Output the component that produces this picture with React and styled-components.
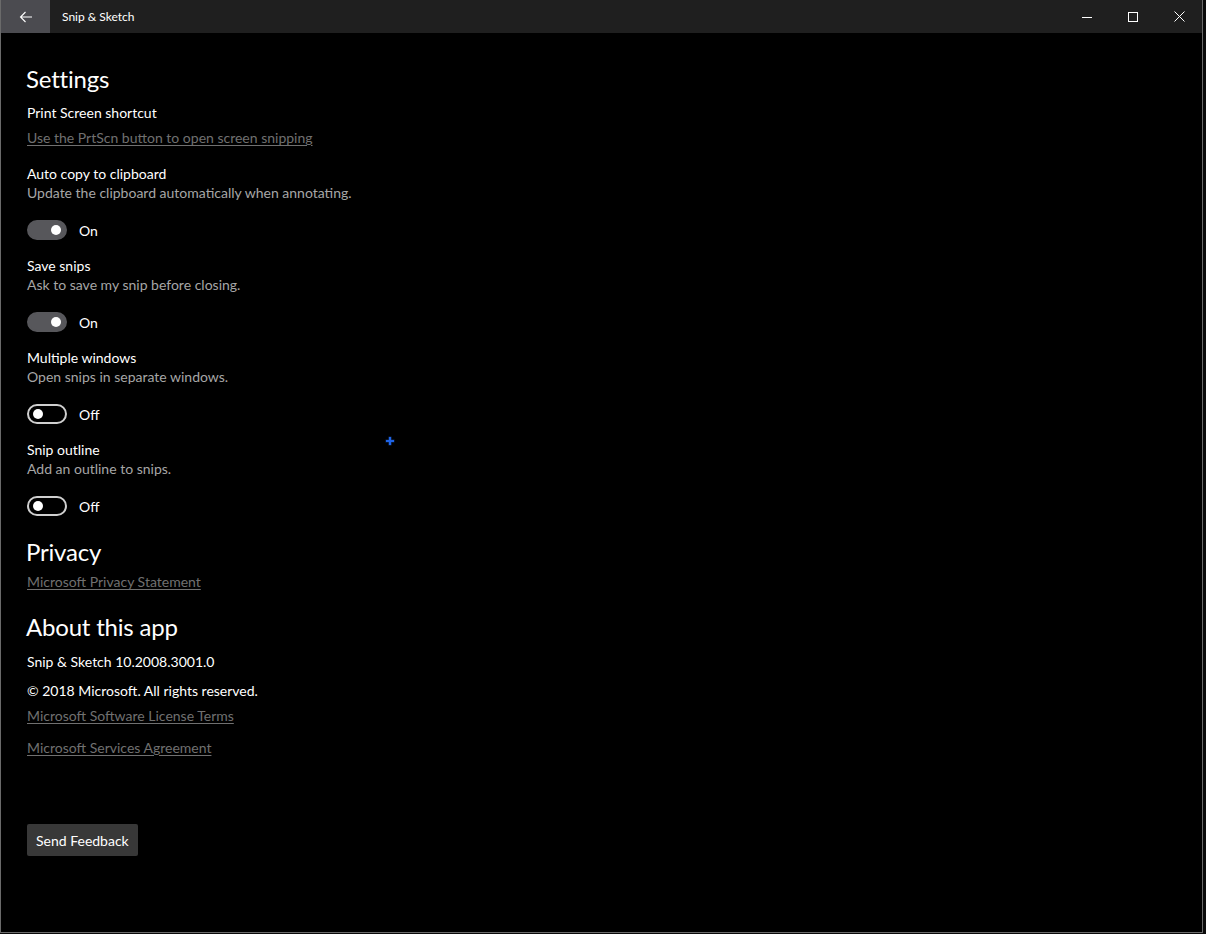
import React from "react";
import styled, { createGlobalStyle } from "styled-components";

const Global = createGlobalStyle`
  html, body { margin: 0; padding: 0; background: #0b0b0b; }
  body { font-family: "Lato", "Segoe UI", "Noto Sans", sans-serif; color: #fff; }
  * { box-sizing: border-box; }
`;

const Window = styled.div`
  position: relative;
  width: 1203px;
  height: 933px;
  background: #000;
  border-left: 1px solid #6a6a6a;
  border-right: 1px solid #6a6a6a;
  border-bottom: 1px solid #6a6a6a;
  display: flex;
  flex-direction: column;
`;

const TitleBar = styled.div`
  height: 33px;
  flex: none;
  background: #1f1f1f;
  display: flex;
  align-items: center;
`;

const BackButton = styled.div`
  width: 49px;
  height: 33px;
  background: #4b4b50;
  display: flex;
  align-items: center;
  justify-content: center;
`;

const Title = styled.div`
  margin-left: 12px;
  font-size: 12px;
  color: #fff;
  flex: 1;
`;

const CaptionButton = styled.div`
  width: 46px;
  height: 33px;
  display: flex;
  align-items: center;
  justify-content: center;
`;

const Content = styled.div`
  flex: 1;
  padding: 0 26px;
  display: flex;
  flex-direction: column;
  align-items: flex-start;
`;

const Heading = styled.div`
  font-size: 24px;
  line-height: 32px;
  font-weight: 400;
  letter-spacing: -0.2px;
  color: #fff;
  margin-top: ${(p) => p.$mt}px;
  margin-left: -1px;
`;

const Label = styled.div`
  font-size: 14px;
  line-height: 19px;
  color: #fff;
  margin-top: ${(p) => p.$mt || 0}px;
`;

const Desc = styled.div`
  font-size: 14px;
  line-height: 19px;
  color: #a6a6a6;
`;

const Link = styled.a`
  font-size: 14px;
  line-height: 19px;
  color: #707070;
  text-decoration: underline;
  text-underline-offset: 2px;
  margin-top: ${(p) => p.$mt || 0}px;
`;

const ToggleRow = styled.div`
  display: flex;
  align-items: center;
  gap: 12px;
  height: 20px;
  margin-top: 18px;
  font-size: 14px;
`;

const Track = styled.div`
  width: 40px;
  height: 20px;
  border-radius: 10px;
  display: flex;
  align-items: center;
  padding: 0 4px;
  justify-content: ${(p) => (p.$on ? "flex-end" : "flex-start")};
  background: ${(p) => (p.$on ? "#57575b" : "transparent")};
  border: 2px solid ${(p) => (p.$on ? "#57575b" : "#cfcfcf")};
`;

const Knob = styled.div`
  width: 10px;
  height: 10px;
  border-radius: 50%;
  background: #fff;
`;

const Button = styled.div`
  margin-top: 67px;
  height: 32px;
  padding: 0 9px;
  display: flex;
  align-items: center;
  background: #383838;
  border-radius: 2px;
  font-size: 14px;
  color: #fff;
`;

const Cursor = styled.svg`
  position: absolute;
  left: 383px;
  top: 435px;
`;

const settings = [
  { title: "Auto copy to clipboard", desc: "Update the clipboard automatically when annotating.", on: true },
  { title: "Save snips", desc: "Ask to save my snip before closing.", on: true },
  { title: "Multiple windows", desc: "Open snips in separate windows.", on: false },
  { title: "Snip outline", desc: "Add an outline to snips.", on: false },
];

function Toggle({ on }) {
  return (
    <ToggleRow>
      <Track $on={on}>
        <Knob />
      </Track>
      <span>{on ? "On" : "Off"}</span>
    </ToggleRow>
  );
}

export default function App() {
  return (
    <>
      <Global />
      <Window>
        <TitleBar>
          <BackButton>
            <svg width="14" height="12" viewBox="0 0 14 12">
              <path d="M13 6H1.5M6.5 1L1.5 6l5 5" stroke="#fff" strokeWidth="1.1" fill="none" />
            </svg>
          </BackButton>
          <Title>Snip &amp; Sketch</Title>
          <CaptionButton>
            <svg width="10" height="10" viewBox="0 0 10 10">
              <path d="M0 5.5h10" stroke="#fff" strokeWidth="1" />
            </svg>
          </CaptionButton>
          <CaptionButton>
            <svg width="10" height="10" viewBox="0 0 10 10">
              <rect x="0.5" y="0.5" width="9" height="9" stroke="#fff" strokeWidth="1" fill="none" />
            </svg>
          </CaptionButton>
          <CaptionButton>
            <svg width="11" height="11" viewBox="0 0 11 11">
              <path d="M0.5 0.5l10 10M10.5 0.5l-10 10" stroke="#fff" strokeWidth="1" />
            </svg>
          </CaptionButton>
        </TitleBar>
        <Content>
          <Heading $mt={30}>Settings</Heading>
          <Label $mt={8}>Print Screen shortcut</Label>
          <Link $mt={6}>Use the PrtScn button to open screen snipping</Link>
          {settings.map((s, i) => (
            <React.Fragment key={s.title}>
              <Label $mt={i === 0 ? 17 : 16}>{s.title}</Label>
              <Desc>{s.desc}</Desc>
              <Toggle on={s.on} />
            </React.Fragment>
          ))}
          <Heading $mt={20}>Privacy</Heading>
          <Link $mt={4}>Microsoft Privacy Statement</Link>
          <Heading $mt={20}>About this app</Heading>
          <Label $mt={9}>Snip &amp; Sketch 10.2008.3001.0</Label>
          <Label $mt={10}>© 2018 Microsoft. All rights reserved.</Label>
          <Link $mt={6}>Microsoft Software License Terms</Link>
          <Link $mt={13}>Microsoft Services Agreement</Link>
          <Button>Send Feedback</Button>
        </Content>
        <Cursor width="12" height="12" viewBox="0 0 12 12">
          <path d="M6 1.5v9M1.5 6h9" stroke="#2a6fe8" strokeWidth="3" opacity="0.35" />
          <path d="M6 2v8M2 6h8" stroke="#1e63e6" strokeWidth="2.2" />
        </Cursor>
      </Window>
    </>
  );
}
